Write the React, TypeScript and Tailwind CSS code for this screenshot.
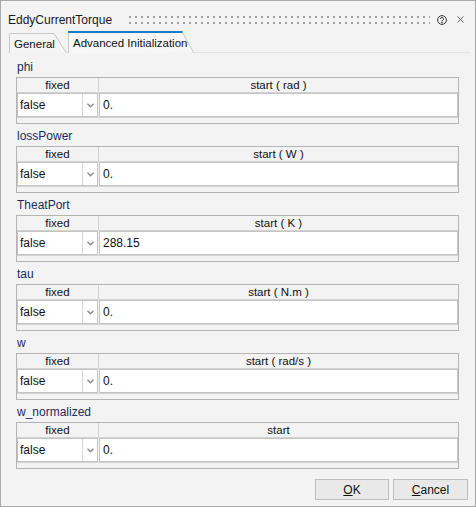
import { X } from "lucide-react";

type Param = { name: string; unit: string; value: string };

const params: Param[] = [
  { name: "phi", unit: "rad", value: "0." },
  { name: "lossPower", unit: "W", value: "0." },
  { name: "TheatPort", unit: "K", value: "288.15" },
  { name: "tau", unit: "N.m", value: "0." },
  { name: "w", unit: "rad/s", value: "0." },
  { name: "w_normalized", unit: "", value: "0." },
];

const font = "font-['Liberation_Sans',Arial,sans-serif]";

const HelpIcon = () => (
  <svg width="10" height="10" viewBox="0 0 10 10" fill="none" stroke="#333" strokeWidth="1">
    <circle cx="5" cy="5" r="4.4" />
    <path d="M3.5 3.9a1.5 1.5 0 1 1 2.1 1.4c-.4.2-.6.4-.6.9v.3" />
    <circle cx="5" cy="7.6" r="0.35" fill="#333" />
  </svg>
);

const Chevron = () => (
  <svg width="7" height="5" viewBox="0 0 7 5">
    <path d="M0.5 0.8 L3.5 3.8 L6.5 0.8" fill="none" stroke="#8a8a8a" strokeWidth="1.4" />
  </svg>
);

const ParamTable = ({ p }: { p: Param }) => (
  <div>
    <div className="h-[22px] pl-[1px] pt-[1px] flex items-center text-[12px] text-[#1c2b5e]">{p.name}</div>
    <div className="h-[47px] border border-[#b4b4b4] flex flex-col">
      <div className="h-[15px] flex leading-[15px] text-[#111] border-b border-[#d2d2d2]">
        <div className="w-[82px] text-center border-r border-[#d2d2d2]">fixed</div>
        <div className="flex-1 text-center">
          {p.unit ? `start ( ${p.unit} )` : "start"}
        </div>
      </div>
      <div className="h-[25px] flex text-[12px] border-b border-[#d2d2d2]">
        <div className="w-[81px] flex bg-white border border-[#c4c4c4]">
          <div className="flex-1 pl-[2px] flex items-center">false</div>
          <div className="w-[15px] border-l border-[#d6d6d6] flex items-center justify-center">
            <Chevron />
          </div>
        </div>
        <div className="w-[1px]" />
        <div className="flex-1 bg-white border border-[#c4c4c4] pl-[3px] flex items-center">
          {p.value}
        </div>
      </div>
      <div className="flex-1" />
    </div>
  </div>
);

export default function App() {
  return (
    <div
      className={`${font} text-[11.5px] text-[#111] w-[476px] h-[507px] bg-[#f3f3f3] border border-[#a8a8a8] flex flex-col`}
    >
      {/* title bar */}
      <div className="h-[30px] pt-[7px] pl-[7px] pr-[9px] flex items-center">
        <span className="text-[12px] text-[#1a1a1a]">EddyCurrentTorque</span>
        <div className="ml-[15px] flex-1 h-[12px] bg-[radial-gradient(circle,#a0a0a0_1px,transparent_1.3px)] bg-[length:6px_6px]" />
        <div className="ml-[7px] flex items-center gap-[8px]">
          <HelpIcon />
          <X size={11} strokeWidth={1.5} className="text-[#333]" />
        </div>
      </div>

      {/* tabs */}
      <div className="h-[22px] flex items-end pl-[8px]">
        <div className="relative w-[58px] h-[20px]">
          <svg className="absolute inset-0" width="58" height="20" viewBox="0 0 58 20">
            <path d="M0.5 20 V0.5 H45 L57.5 20" fill="#f5f5f5" stroke="#c8c8c8" />
          </svg>
          <span className="relative block pl-[5px] pt-[3px]">General</span>
        </div>
        <div className="relative ml-[1px] w-[126px] h-[22px]">
          <svg className="absolute inset-0" width="126" height="22" viewBox="0 0 126 22">
            <path d="M0.5 22 V0.5 H114 L125.5 21.5 H126" fill="#f7f7f7" stroke="#c8c8c8" />
            <path d="M0 1 H114.5" stroke="#1b79c6" strokeWidth="2" />
          </svg>
          <span className="relative block pl-[5px] pt-[4px]">Advanced Initialization</span>
        </div>
        <div className="flex-1 border-b border-[#e2e2e2] mr-[5px]" />
      </div>

      {/* parameter tables */}
      <div className="pl-[15px] pr-[16px] pt-[2px] flex flex-col">
        {params.map((p) => (
          <ParamTable key={p.name} p={p} />
        ))}
      </div>

      {/* buttons */}
      <div className="mt-auto mb-[6px] pr-[7px] flex justify-end gap-[4px] text-[12px]">
        <button className="w-[74px] h-[21px] bg-[#e9e9e9] border border-[#bdbdbd]">
          <span className="underline">O</span>K
        </button>
        <button className="w-[75px] h-[21px] bg-[#e9e9e9] border border-[#bdbdbd]">
          <span className="underline">C</span>ancel
        </button>
      </div>
    </div>
  );
}
